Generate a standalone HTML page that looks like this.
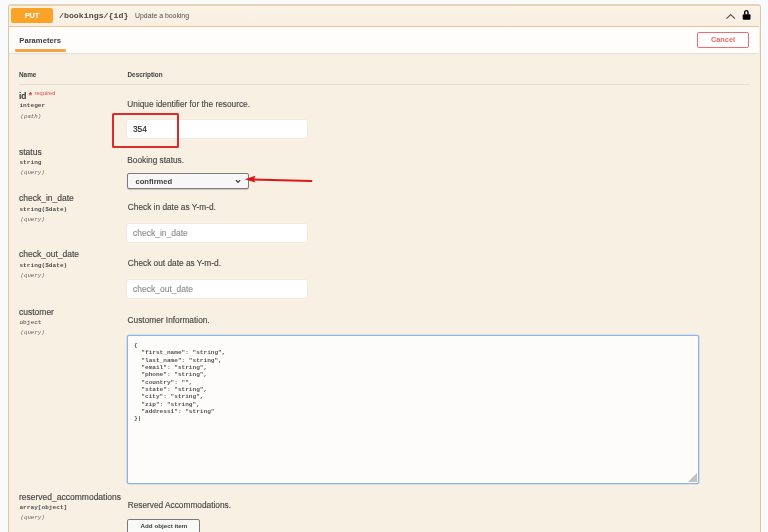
<!DOCTYPE html>
<html><head><meta charset="utf-8">
<style>
*{margin:0;padding:0;box-sizing:border-box}
#wrap{position:absolute;left:0;top:0;width:768px;height:532px;filter:blur(0.6px)}
html,body{width:768px;height:532px;overflow:hidden;background:#f9fafb;font-family:"Liberation Sans",sans-serif;color:#414141}
.a{position:absolute;white-space:nowrap}
.a.desc,.a.pn,.a.ph{-webkit-text-stroke:0.15px currentColor}
#ob{position:absolute;left:8px;top:4px;width:753px;height:540px;border:1px solid #e2c59e;border-top:2px solid #e8d2b3;border-radius:3px;background:#f9f0e4}
#sum{position:absolute;left:9px;top:6px;width:750px;height:21px;border-bottom:1px solid #eac493;background:linear-gradient(#faf3e6,#f9eee2)}
#put{position:absolute;left:11px;top:8px;width:42px;height:15px;background:#fba229;border-radius:2px;color:#fff8ec;font-weight:700;font-size:7.3px;line-height:16.2px;text-align:center;-webkit-text-stroke:0.2px #fff8ec}
.path{font-family:"Liberation Mono",monospace;font-weight:700;font-size:7px;color:#4a4a4a;transform-origin:0 0;transform:scaleX(1.18)}
#hdr{position:absolute;left:9px;top:27px;width:750px;height:26px;background:#fefdfb;box-shadow:0 1px 1px rgba(0,0,0,.06)}
.tab{font-weight:700;font-size:7.65px}
#uline{position:absolute;left:15px;top:49px;width:51px;height:3px;background:#f5a448;border-radius:1px}
#cancel{position:absolute;left:697px;top:32px;width:52px;height:16px;border:1.5px solid #e96f73;border-radius:2px;color:#e8666b;font-weight:700;font-size:7.4px;line-height:14px;text-align:center;background:#fff}
.th{font-weight:700;font-size:6.4px;color:#414141}
#hline{position:absolute;left:19px;top:84px;width:731px;height:1px;background:#e6ddd2}
.pn{font-size:8.5px;color:#464646}
.pt{font-family:"Liberation Mono",monospace;font-weight:700;font-size:6.15px;color:#505050}
.pi{font-family:"Liberation Mono",monospace;font-style:italic;font-size:5.75px;color:#666}
.desc{font-size:8.3px;color:#4a4a4a}
.inp{position:absolute;left:127px;width:180px;height:18px;background:#fff;border-radius:2px;box-shadow:0 0 0 0.5px rgba(230,220,210,.6)}
.ph{font-size:8.5px;color:#909090}
#sel{position:absolute;left:127px;top:173px;width:122px;height:15.5px;border:1px solid #7c7c7c;border-radius:2px;background:#f7f7f7;box-shadow:0 1px 1px rgba(0,0,0,.18)}
#ta{position:absolute;left:127px;top:335px;width:572px;height:149px;border:1px solid #86b6ea;box-shadow:0 0 0 0.6px rgba(134,182,234,.55);border-radius:2px;background:#fdfcfa}
.js{font-family:"Liberation Mono",monospace;font-weight:700;font-size:6.1px;line-height:7.33px;color:#555;white-space:pre}
#btn{position:absolute;left:127px;top:519px;width:73px;height:20px;border:1.5px solid #7a7a7a;border-radius:2px;background:#f9f9f8}
</style></head><body>
<div id="wrap">
<div id="ob"></div>
<div id="sum"></div>
<div id="put">PUT</div>
<div class="a path" style="left:59px;top:11.5px">/bookings/{id}</div>
<div class="a" style="left:135px;top:11.5px;font-size:6.9px;color:#505050">Update a booking</div>
<!-- chevron -->
<svg class="a" style="left:724px;top:11px" width="14" height="10" viewBox="0 0 14 10"><path d="M2.5 7.6 L6.7 3.6 L10.9 7.6" fill="none" stroke="#555" stroke-width="1.2"/></svg>
<!-- lock -->
<svg class="a" style="left:741px;top:9px" width="11" height="12" viewBox="0 0 11 12"><path d="M3.7 5.6 V3.3 a1.65 1.65 0 0 1 3.3 0 V5.6" fill="none" stroke="#000" stroke-width="1.4"/><rect x="1.7" y="5.3" width="7.8" height="5.5" rx="1" fill="#000"/></svg>
<div id="hdr"></div>
<div class="a tab" style="left:19.3px;top:35.7px">Parameters</div>
<div id="uline"></div>
<div id="cancel">Cancel</div>

<div class="a th" style="left:19px;top:70.8px">Name</div>
<div class="a th" style="left:127.5px;top:70.8px">Description</div>
<div id="hline"></div>

<!-- id -->
<div class="a pn" style="left:19px;top:90.7px;font-weight:700">id</div>
<div class="a" style="left:28.8px;top:89.6px;font-size:8.6px;line-height:10px;color:#d03a3e;font-weight:700">*</div>
<div class="a" style="left:34.5px;top:90px;font-size:5.7px;color:#dc4a52">required</div>
<div class="a pt" style="left:19.4px;top:101.5px">integer</div>
<div class="a pi" style="left:20.5px;top:112.8px">(path)</div>
<div class="a desc" style="left:127.3px;top:98.6px">Unique identifier for the resource.</div>
<div class="inp" style="top:120px"></div>
<div class="a desc" style="left:133px;top:124px;color:#222">354</div>
<div class="a" style="left:112px;top:112.5px;width:67px;height:35px;border:2px solid #de2a2a;border-radius:1.5px"></div>

<!-- status -->
<div class="a pn" style="left:19px;top:147px">status</div>
<div class="a pt" style="left:19.4px;top:158.5px">string</div>
<div class="a pi" style="left:20.5px;top:168.5px">(query)</div>
<div class="a desc" style="left:127.3px;top:154.5px">Booking status.</div>
<div id="sel"></div>
<div class="a" style="left:135.5px;top:176.5px;font-size:7.6px;font-weight:700;color:#414141">confirmed</div>
<svg class="a" style="left:233px;top:178px" width="9" height="7" viewBox="0 0 9 7"><path d="M2.9 2.2 L5 4.3 L7.1 2.2" fill="none" stroke="#333" stroke-width="1.2"/></svg>
<!-- red arrow -->
<svg class="a" style="left:244px;top:174px" width="72" height="12" viewBox="0 0 72 12"><path d="M8 5.5 L67.5 7" stroke="#e01515" stroke-width="1.8" stroke-linecap="round"/><path d="M0.7 5.2 L11.3 1.8 L10 5.4 L11.3 8.6 Z" fill="#e01515"/></svg>

<!-- check_in_date -->
<div class="a pn" style="left:19px;top:193px">check_in_date</div>
<div class="a pt" style="left:19.4px;top:205.5px">string($date)</div>
<div class="a pi" style="left:20.5px;top:216px">(query)</div>
<div class="a desc" style="left:127.8px;top:201.5px">Check in date as Y-m-d.</div>
<div class="inp" style="top:223.5px"></div>
<div class="a ph" style="left:133px;top:228px">check_in_date</div>

<!-- check_out_date -->
<div class="a pn" style="left:19px;top:249px">check_out_date</div>
<div class="a pt" style="left:19.4px;top:262px">string($date)</div>
<div class="a pi" style="left:20.5px;top:272px">(query)</div>
<div class="a desc" style="left:127.8px;top:257.5px">Check out date as Y-m-d.</div>
<div class="inp" style="top:279.5px"></div>
<div class="a ph" style="left:133px;top:284px">check_out_date</div>

<!-- customer -->
<div class="a pn" style="left:19px;top:307px">customer</div>
<div class="a pt" style="left:19.4px;top:318.5px;font-weight:400;color:#444">object</div>
<div class="a pi" style="left:20.5px;top:328.5px">(query)</div>
<div class="a desc" style="left:127.6px;top:314.7px">Customer Information.</div>
<div id="ta"></div>
<div class="a js" style="left:134px;top:342px">{
  "first_name": "string",
  "last_name": "string",
  "email": "string",
  "phone": "string",
  "country": "",
  "state": "string",
  "city": "string",
  "zip": "string",
  "address1": "string"
}|</div>
<svg class="a" style="left:686px;top:472px" width="12" height="11" viewBox="0 0 12 11"><polygon points="2,10 11,1 11,10" fill="#bdbdbd"/><path d="M5.5 9.8 L10.8 4.5 M8.5 9.8 L10.8 7.5" stroke="#d8d8d8" stroke-width="0.8"/></svg>

<!-- reserved -->
<div class="a pn" style="left:19px;top:492px">reserved_accommodations</div>
<div class="a pt" style="left:19.4px;top:504px">array[object]</div>
<div class="a pi" style="left:20.5px;top:514px">(query)</div>
<div class="a desc" style="left:127.7px;top:500px">Reserved Accommodations.</div>
<div id="btn"></div>
<div class="a" style="left:140.5px;top:521.5px;font-size:6.25px;font-weight:700;color:#414141">Add object item</div>
</div>
</body></html>
